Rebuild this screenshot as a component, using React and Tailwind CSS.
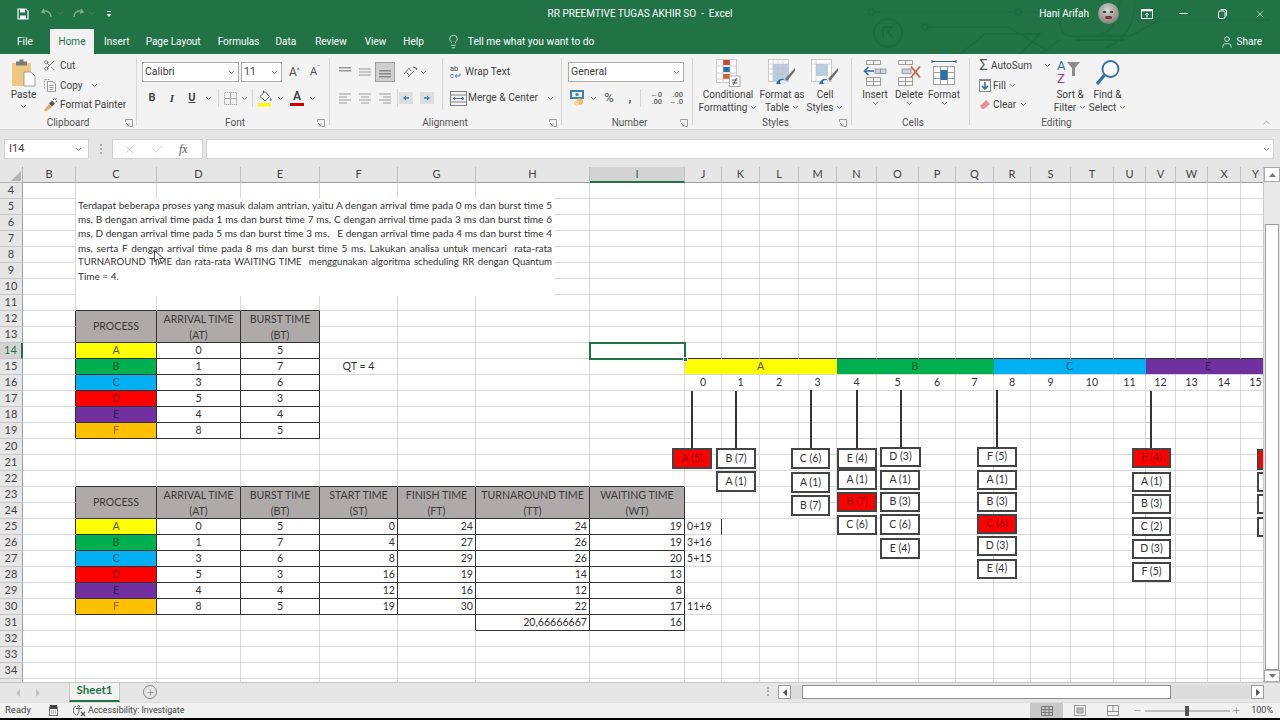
import React from "react";
import { Scissors, Lightbulb, User, X, Check, Minus, Plus, ChevronUp } from "lucide-react";

const COLS = "B C D E F G H I J K L M N O P Q R S T U V W X Y".split(" ");
const ROWS = Array.from({ length: 32 }, (_, i) => i + 4);
const cIdx = (c) => COLS.indexOf(c);

const Y = "bg-[#ffff00] text-[#555]";
const G = "bg-[#00b050] text-[#0d5a2f]";
const L = "bg-[#00b0f0] text-[#1a5f88]";
const R = "bg-[#ff0000] text-[#a00000]";
const P = "bg-[#7030a0] text-[#38195a]";
const O = "bg-[#ffc000] text-[#8a6500]";
const HD = "bg-[#aeaaaa] text-[#3a3a3a]";

const CELLS = {};
const put = (k, t, o = {}) => (CELLS[k] = { t, ...o });
[["C", "PROCESS"], ["D", "ARRIVAL TIME", "(AT)"], ["E", "BURST TIME", "(BT)"]].forEach(([c, a, b]) =>
  put(c + 12, a, { t2: b, rs: 2, bg: HD, al: "c" })
);
[["C", "PROCESS"], ["D", "ARRIVAL TIME", "(AT)"], ["E", "BURST TIME", "(BT)"], ["F", "START TIME", "(ST)"], ["G", "FINISH TIME", "(FT)"], ["H", "TURNAROUND TIME", "(TT)"], ["I", "WAITING TIME", "(WT)"]].forEach(([c, a, b]) =>
  put(c + 23, a, { t2: b, rs: 2, bg: HD, al: "c" })
);
const PROCS = [["A", Y, 0, 5], ["B", G, 1, 7], ["C", L, 3, 6], ["D", R, 5, 3], ["E", P, 4, 4], ["F", O, 8, 5]];
PROCS.forEach(([n, bg, at, bt], i) => {
  put("C" + (14 + i), n, { bg, al: "c" });
  put("D" + (14 + i), at, { al: "c" });
  put("E" + (14 + i), bt, { al: "c" });
  put("C" + (25 + i), n, { bg, al: "c" });
  put("D" + (25 + i), at, { al: "c" });
  put("E" + (25 + i), bt, { al: "c" });
});
const T2 = [[0, 24, 24, 19], [4, 27, 26, 19], [8, 29, 26, 20], [16, 19, 14, 13], [12, 16, 12, 8], [19, 30, 22, 17]];
T2.forEach((r, i) => ["F", "G", "H", "I"].forEach((c, j) => put(c + (25 + i), r[j], { al: "r" })));
put("H31", "20,66666667", { al: "r" });
put("I31", "16", { al: "r" });
put("J25", "0+19", { al: "l", rd: true });
put("J26", "3+16", { al: "l" });
put("J27", "5+15", { al: "l" });
put("J30", "11+6", { al: "l" });
put("F15", "QT = 4", { al: "c" });
put("J15", "A", { cs: 4, bg: Y, al: "c" });
put("N15", "B", { cs: 4, bg: G, al: "c" });
put("R15", "C", { cs: 4, bg: L, al: "c" });
put("V15", "E", { cs: 4, bg: P, al: "c" });
"J K L M N O P Q R S T U V W X Y".split(" ").forEach((c, i) => put(c + 16, i, { al: "c" }));

const covered = new Set();
Object.entries(CELLS).forEach(([k, v]) => {
  const c = k[0];
  const r = +k.slice(1);
  for (let i = 0; i < (v.cs || 1); i++)
    for (let j = 0; j < (v.rs || 1); j++) if (i || j) covered.add(COLS[cIdx(c) + i] + (r + j));
});
const inT = (i, r) => {
  const c = COLS[i];
  if (!c) return false;
  if (i >= 1 && i <= 3 && r >= 12 && r <= 19) return true;
  if (i >= 1 && i <= 7 && r >= 23 && r <= 30) return true;
  if (i >= 6 && i <= 7 && r === 31) return true;
  return false;
};

function Cell({ c, r }) {
  const key = c + r;
  if (covered.has(key)) return null;
  const v = CELLS[key] || {};
  const i = cIdx(c);
  const ci = i + (v.cs || 1) - 1;
  const ri = r + (v.rs || 1) - 1;
  const dr = inT(ci, r) || inT(ci + 1, r) || v.rd;
  const db = inT(i, ri) || inT(i, ri + 1);
  const gantTop = r === 14 && i >= 8;
  const filled = v.bg && v.cs;
  return (
    <div
      className={[
        "border-r border-b min-w-0 flex overflow-visible whitespace-nowrap text-[10.6px] leading-[15px]",
        dr ? "border-r-[#333]" : filled ? "border-r-transparent" : "border-r-[#d9d9d9]",
        db || gantTop ? "border-b-[#333]" : "border-b-[#d9d9d9]",
        v.cs === 4 ? "col-span-4" : "",
        v.rs === 2 ? "row-span-2" : "",
        v.bg || "text-[#333]",
        v.al === "c" ? "justify-center text-center" : v.al === "r" ? "justify-end text-right pr-[2px]" : "justify-start pl-[2px]",
        "items-center",
      ].join(" ")}
    >
      {v.t2 ? (
        <div className="leading-[16px]">
          <div>{v.t}</div>
          <div>{v.t2}</div>
        </div>
      ) : (
        v.t
      )}
    </div>
  );
}

const BOXES = [
  ["A (5)", "left-[672px] top-[448px] w-[40px] h-[21px]", 1],
  ["B (7)", "left-[716px] top-[448px] w-[40px] h-[21px]"],
  ["A (1)", "left-[716px] top-[471px] w-[40px] h-[21px]"],
  ["C (6)", "left-[791px] top-[448px] w-[39px] h-[21px]"],
  ["A (1)", "left-[791px] top-[472px] w-[39px] h-[21px]"],
  ["B (7)", "left-[791px] top-[495px] w-[39px] h-[21px]"],
  ["E (4)", "left-[837px] top-[448px] w-[40px] h-[21px]"],
  ["A (1)", "left-[837px] top-[469px] w-[40px] h-[21px]"],
  ["B (7)", "left-[837px] top-[492px] w-[40px] h-[20px]", 1],
  ["C (6)", "left-[837px] top-[515px] w-[40px] h-[20px]"],
  ["D (3)", "left-[880px] top-[447px] w-[41px] h-[20px]"],
  ["A (1)", "left-[880px] top-[470px] w-[40px] h-[20px]"],
  ["B (3)", "left-[880px] top-[492px] w-[40px] h-[20px]"],
  ["C (6)", "left-[880px] top-[514px] w-[40px] h-[21px]"],
  ["E (4)", "left-[880px] top-[538px] w-[40px] h-[21px]"],
  ["F (5)", "left-[977px] top-[447px] w-[40px] h-[20px]"],
  ["A (1)", "left-[977px] top-[470px] w-[40px] h-[20px]"],
  ["B (3)", "left-[977px] top-[492px] w-[40px] h-[20px]"],
  ["C (6)", "left-[977px] top-[514px] w-[40px] h-[20px]", 1],
  ["D (3)", "left-[977px] top-[536px] w-[40px] h-[20px]"],
  ["E (4)", "left-[977px] top-[559px] w-[40px] h-[20px]"],
  ["E (4)", "left-[1132px] top-[448px] w-[39px] h-[20px]", 1],
  ["A (1)", "left-[1132px] top-[472px] w-[39px] h-[20px]"],
  ["B (3)", "left-[1132px] top-[494px] w-[39px] h-[20px]"],
  ["C (2)", "left-[1132px] top-[517px] w-[39px] h-[19px]"],
  ["D (3)", "left-[1132px] top-[539px] w-[39px] h-[20px]"],
  ["F (5)", "left-[1132px] top-[562px] w-[39px] h-[20px]"],
  ["", "left-[1257px] top-[449px] w-[40px] h-[21px]", 1],
  ["", "left-[1257px] top-[472px] w-[40px] h-[20px]"],
  ["", "left-[1257px] top-[494px] w-[40px] h-[20px]"],
  ["", "left-[1257px] top-[517px] w-[40px] h-[20px]"],
];
const LINES = [
  "left-[691px] h-[57px] top-[391px]",
  "left-[735px] h-[57px] top-[391px]",
  "left-[810px] h-[58px] top-[390px]",
  "left-[856px] h-[58px] top-[390px]",
  "left-[900px] h-[57px] top-[390px]",
  "left-[996px] h-[57px] top-[390px]",
  "left-[1150px] h-[57px] top-[391px]",
];

const TEXT = [
  "Terdapat beberapa proses yang masuk dalam antrian, yaitu A dengan arrival time pada 0 ms dan burst time 5",
  "ms, B dengan arrival time pada 1 ms dan burst time 7 ms, C dengan arrival time pada 3 ms dan burst time 6",
  "ms, D dengan arrival time pada 5 ms dan burst time 3 ms,   E dengan arrival time pada 4 ms dan burst time 4",
  "ms, serta F dengan arrival time pada 8 ms dan burst time 5 ms. Lakukan analisa untuk mencari  rata-rata",
];

const Chev = ({ className = "" }) => (
  <svg width="7" height="5" viewBox="0 0 7 5" className={`shrink-0 ${className}`}>
    <path d="M1 1l2.5 2.5L6 1" fill="none" stroke="#777" strokeWidth="1" />
  </svg>
);
const Launcher = () => (
  <svg width="8" height="8" viewBox="0 0 8 8">
    <path d="M.5 3V.5H7.5V7.5H4.5M1 4l3 3M4 4.5V7H1.5" fill="none" stroke="#888" strokeWidth="0.8" />
  </svg>
);
const VSep = ({ className = "" }) => <div className={`w-px bg-[#d6d6d6] shrink-0 ${className}`} />;
const Box20 = ({ children, className = "" }) => (
  <div className={`w-[20px] h-[20px] flex items-center justify-center shrink-0 ${className}`}>{children}</div>
);

function Group({ className = "", label, launcher, children }) {
  return (
    <div className={`flex flex-col shrink-0 ${className}`}>
      <div className="h-[62px] flex min-h-0">{children}</div>
      <div className="relative h-[13px] leading-[14px] text-center text-[10px] text-[#555]">
        {label}
        {launcher && (
          <div className="absolute right-[3px] top-[3px] flex">
            <Launcher />
          </div>
        )}
      </div>
    </div>
  );
}

function BigBtn({ className = "", icon, l1, l2, chev2 = true }) {
  return (
    <div className={`flex flex-col items-center pt-[4px] whitespace-nowrap shrink-0 ${className}`}>
      <div className="h-[30px] flex items-center justify-center">{icon}</div>
      <div className="leading-[13px]">{l1}</div>
      <div className="leading-[13px] flex items-center justify-center gap-[3px]">
        {l2}
        {chev2 && <Chev />}
      </div>
    </div>
  );
}

const AlignI = ({ ys, xs, gray = "#9a9a9a", h = 1.5 }) => (
  <svg width="14" height="14" viewBox="0 0 14 14">
    {ys.map((y, i) => (
      <rect key={i} x={xs ? xs[i][0] : 1} y={y} width={xs ? xs[i][1] : 12} height={h} fill={gray} />
    ))}
  </svg>
);

const IconPaste = () => (
  <svg width="26" height="28" viewBox="0 0 26 28">
    <rect x="1" y="4" width="19" height="23" fill="#eec883" />
    <rect x="5" y="2.5" width="11" height="4" fill="#7a7a7a" />
    <rect x="8.5" y="0.5" width="4" height="3" fill="#7a7a7a" />
    <path d="M13 13h7l4 4v10H13z" fill="#fff" stroke="#8a8a8a" strokeWidth="0.8" />
  </svg>
);
const IconCopy = () => (
  <svg width="14" height="14" viewBox="0 0 14 14" fill="none" stroke="#8d8d8d" strokeWidth="0.9">
    <path d="M1.5 10.5V1.5H7" strokeDasharray="2 1" />
    <path d="M4.5 3.5h5.5l2.5 2.5v7.5h-8z" fill="#fff" />
    <path d="M6.5 7.5h4M6.5 9.5h4M6.5 11.5h4" />
  </svg>
);
const IconBrush = () => (
  <svg width="15" height="14" viewBox="0 0 15 14">
    <path d="M1 12l5-6 3 3-6 4.5z" fill="#d7ae62" />
    <path d="M6 5.5l3-3 3 3-3 3z" fill="#555" />
    <path d="M10 2l1.5-1.5M12.5 4l1.5-1M12 1.5l1.5-1" stroke="#555" strokeWidth="1" />
  </svg>
);
const IconBorder = () => (
  <svg width="15" height="15" viewBox="0 0 15 15" fill="none" stroke="#a8a8a8" strokeWidth="1">
    <rect x="1.5" y="1.5" width="12" height="12" strokeDasharray="1.5 0.6" />
    <path d="M7.5 1.5v12M1.5 7.5h12" />
  </svg>
);
const IconFill = () => (
  <svg width="16" height="18" viewBox="0 0 16 18">
    <path d="M3 7.5L8 2.5l4.5 5L8 12z" fill="#fff" stroke="#666" strokeWidth="1" />
    <path d="M6.5 4V1.5" stroke="#666" strokeWidth="1" />
    <path d="M13.5 8.5c1 1.5 1.3 2.2 1 3-.4.8-1.8.6-1.8-.3 0-.6.4-1.6.8-2.7z" fill="#4a7fb5" />
    <rect x="1" y="14" width="13" height="3.5" fill="#ffff00" />
  </svg>
);
const IconOrient = () => (
  <svg width="16" height="14" viewBox="0 0 16 14" fill="none" stroke="#777" strokeWidth="1">
    <path d="M2 9l5-6 2 3M4 7.5l3 2M6 12l6-6" />
    <path d="M11 2l4 1.5-1 1.5" strokeWidth="1" stroke="#555" />
  </svg>
);
const IconWrap = () => (
  <span className="flex flex-col text-[7.5px] leading-[7px] text-[#444] w-[12px]">
    <span>ab</span>
    <span className="flex items-center">
      c<svg width="7" height="6" viewBox="0 0 7 6"><path d="M6 .5V3H1.5M3 1.5L1 3l2 1.5" fill="none" stroke="#3a78b5" strokeWidth="0.9" /></svg>
    </span>
  </span>
);
const IconMerge = () => (
  <svg width="17" height="15" viewBox="0 0 17 15" fill="none" stroke="#777" strokeWidth="0.9">
    <rect x="0.5" y="0.5" width="16" height="14" />
    <path d="M.5 4h16M.5 11h16" />
    <path d="M3 7.5h11M3 7.5l2-1.5M3 7.5l2 1.5M14 7.5l-2-1.5M14 7.5l-2 1.5" stroke="#2f6fa8" />
  </svg>
);
const IconIndent = ({ flip }) => (
  <svg width="14" height="14" viewBox="0 0 14 14" className={flip ? "-scale-x-100" : ""}>
    <rect x="0" y="1" width="14" height="12" fill="#dedede" />
    <path d="M7 4.5L4 7l3 2.5z" fill="#3f7fb3" />
    <rect x="6.5" y="6.2" width="3.5" height="1.6" fill="#3f7fb3" />
  </svg>
);
const IconAcct = () => (
  <svg width="18" height="18" viewBox="0 0 18 18">
    <rect x="1" y="1" width="14" height="9" fill="#3f7fb3" />
    <rect x="3" y="3" width="10" height="5" fill="#e6f0f7" />
    <circle cx="8" cy="5.5" r="1.6" fill="#3f7fb3" />
    <circle cx="11" cy="12.5" r="3.2" fill="#edbb6d" />
    <circle cx="7.5" cy="14" r="2.6" fill="#f3d7a6" />
  </svg>
);
const IconDecUp = ({ up }) => (
  <span className="relative w-[16px] h-[14px] text-[7.5px] leading-[7px] font-semibold text-[#666] text-right flex flex-col">
    <span>{up ? "←0" : ".00"}</span>
    <span>{up ? ".00" : "→.0"}</span>
  </span>
);
const IconCond = () => (
  <svg width="25" height="28" viewBox="0 0 25 28">
    <g stroke="#bdbdbd" strokeWidth="0.8" fill="#fff">
      <rect x="0.5" y="0.5" width="20" height="23" />
    </g>
    <rect x="7" y="1" width="7" height="5" fill="#c7472f" />
    <rect x="7" y="8" width="7" height="5" fill="#2f6fa8" />
    <rect x="7" y="15" width="7" height="5" fill="#d0662c" />
    <path d="M7 1v22M14 1v22M1 7h20M1 14h20M1 20h20" stroke="#bdbdbd" strokeWidth="0.7" />
    <rect x="13.5" y="17" width="10.5" height="10.5" fill="#fff" stroke="#999" strokeWidth="0.8" />
    <path d="M16 21h5.5M16 24h5.5M20.5 19l-3 7" stroke="#444" strokeWidth="0.9" />
  </svg>
);
const IconTbl = ({ kind }) => (
  <svg width="28" height="28" viewBox="0 0 28 28">
    <rect x="0.5" y="0.5" width="20" height="22" fill="#fff" stroke="#bdbdbd" strokeWidth="0.8" />
    {kind === "table" ? (
      <>
        <rect x="5" y="5" width="15" height="17" fill="#b9cde3" />
        <path d="M5 1v21M10 1v21M15 1v21M1 5h19M1 10h19M1 15h19" stroke="#c2c2c2" strokeWidth="0.7" />
      </>
    ) : (
      <>
        <rect x="5" y="5" width="12" height="12" fill="#b9cde3" />
        <path d="M1 5h19M5 1v21" stroke="#c2c2c2" strokeWidth="0.7" />
      </>
    )}
    <path d="M27 9L17 20l2 2L27 12z" fill="#6f6f6f" />
    <path d="M8 27c0-5 4-8 7-7 2 .7 3 3 2 5H8z" fill="#2f6fa8" />
    <ellipse cx="15" cy="23" rx="3" ry="2" fill="#e8eef5" />
  </svg>
);
const IconInsert = () => (
  <svg width="24" height="28" viewBox="0 0 24 28" fill="none" stroke="#8c8c8c" strokeWidth="0.8">
    <path d="M3.5 1.5h14v4h-14zM10.5 1.5v4M3.5 18.5h14v8h-14zM10.5 18.5v8M3.5 22.5h14" />
    <rect x="12" y="10" width="5.5" height="4.5" fill="#c9d3dd" />
    <rect x="17.5" y="10" width="5.5" height="4.5" fill="#c9d3dd" />
    <path d="M11 12H1.5M5.5 8l-4 4 4 4" stroke="#2f6fa8" strokeWidth="1.7" />
  </svg>
);
const IconDelete = () => (
  <svg width="26" height="28" viewBox="0 0 26 28" fill="none" stroke="#8c8c8c" strokeWidth="0.8">
    <path d="M2.5 1.5h14v4h-14zM9.5 1.5v4M2.5 18.5h14v8h-14zM9.5 18.5v8M2.5 22.5h14" />
    <rect x="6" y="10" width="9" height="4.5" fill="#c9d3dd" />
    <path d="M15 7.5l9 11M24 7.5l-9 11" stroke="#d9614a" strokeWidth="1.8" />
  </svg>
);
const IconFormat = () => (
  <svg width="26" height="28" viewBox="0 0 26 28" fill="none" stroke="#8c8c8c" strokeWidth="0.8">
    <path d="M1 2.5h24M1 1v3M25 1v3" stroke="#2f6fa8" strokeWidth="1" />
    <rect x="2.5" y="7.5" width="21" height="18" fill="#fff" />
    <path d="M9.5 7.5v18M16.5 7.5v18M2.5 13.5h21M2.5 19.5h21" />
    <rect x="9.5" y="11" width="7" height="10" fill="#2f6fa8" stroke="none" />
  </svg>
);
const IconSort = () => (
  <span className="w-[26px] h-[28px] flex items-start">
    <span className="flex flex-col text-[13px] leading-[13px]">
      <span className="text-[#2f6fa8]">A</span>
      <span className="text-[#a23f96]">Z</span>
    </span>
    <svg width="13" height="14" viewBox="0 0 13 14" className="mt-[3px] ml-[2px]">
      <path d="M0 0h13L8 6v8H5V6z" fill="#8b8b8b" />
    </svg>
  </span>
);
const IconFind = () => (
  <svg width="26" height="28" viewBox="0 0 26 28" fill="none">
    <circle cx="15.5" cy="10" r="8" stroke="#2f6fa8" strokeWidth="1.8" fill="#fff" />
    <path d="M9.5 16L2 25" stroke="#2f6fa8" strokeWidth="3.2" />
  </svg>
);

function TitleBar() {
  return (
    <div className="relative h-[27px] flex items-center text-white text-[10px]">
      <svg width="12" height="12" viewBox="0 0 12 12" className="ml-[17px]">
        <path d="M1 1h8l2 2v8H1z" fill="none" stroke="#fff" strokeWidth="1.2" />
        <rect x="3" y="1" width="5" height="3.5" fill="#fff" />
        <rect x="3" y="7.5" width="6" height="3.5" fill="#fff" />
      </svg>
      <svg width="12" height="11" viewBox="0 0 12 11" className="ml-[12px] opacity-40">
        <path d="M3 1L1 4l3 1M1.5 4c3-2 8-1 8.5 5" fill="none" stroke="#fff" strokeWidth="1.4" />
      </svg>
      <Chev className="ml-[4px] opacity-40 invert" />
      <svg width="12" height="11" viewBox="0 0 12 11" className="ml-[8px] -scale-x-100 opacity-40">
        <path d="M3 1L1 4l3 1M1.5 4c3-2 8-1 8.5 5" fill="none" stroke="#fff" strokeWidth="1.4" />
      </svg>
      <Chev className="ml-[4px] opacity-40 invert" />
      <svg width="6" height="8" viewBox="0 0 6 8" className="ml-[11px]">
        <path d="M1 1.5h4M1 4l2 2.5L5 4" fill="#fff" stroke="#fff" strokeWidth="0.8" />
      </svg>
      <div className="absolute inset-x-0 top-[6px] text-center leading-[15px] whitespace-pre">RR PREEMTIVE TUGAS AKHIR SO  -  Excel</div>
      <div className="ml-auto flex items-center relative">
        <span className="leading-[15px]">Hani Arifah</span>
        <div className="relative ml-[9px] w-[21px] h-[21px] rounded-full bg-[radial-gradient(circle_at_45%_35%,#cfd8cd_0%,#a9a09c_45%,#5f6a66_100%)] overflow-hidden flex items-center justify-center">
          <div className="absolute left-[5px] top-[8px] w-[3px] h-[2px] bg-[#444]" />
          <div className="absolute left-[12px] top-[8px] w-[3px] h-[2px] bg-[#444]" />
          <div className="w-[7px] h-[3px] mt-[7px] rounded-full bg-[#7a3a3a]" />
        </div>
        <svg width="12" height="10" viewBox="0 0 12 10" className="ml-[22px]">
          <rect x="0.5" y="0.5" width="11" height="9" fill="none" stroke="#fff" />
          <path d="M1 1.5h10" stroke="#fff" strokeWidth="1.5" />
          <path d="M6 8.5V4M4 6l2-2 2 2" stroke="#fff" fill="none" />
        </svg>
        <div className="ml-[26px] w-[9px] h-px bg-white" />
        <svg width="9" height="10" viewBox="0 0 9 10" fill="none" stroke="#fff" className="ml-[30px]">
          <rect x="0.5" y="2" width="6.5" height="7.5" rx="1.5" />
          <path d="M2.5 .7H7A1.5 1.5 0 0 1 8.5 2.2V7" />
        </svg>
        <X size={12} strokeWidth={1.2} className="ml-[27px] mr-[14px]" />
      </div>
    </div>
  );
}

function TabsRow() {
  const tabs = [
    ["Insert", "ml-[10px]"],
    ["Page Layout", "ml-[16px]"],
    ["Formulas", "ml-[17px]"],
    ["Data", "ml-[16px]"],
    ["Review", "ml-[19px]"],
    ["View", "ml-[18px]"],
    ["Help", "ml-[17px]"],
  ];
  return (
    <div className="h-[27px] flex items-end text-[10px] text-white">
      <div className="h-[25px] leading-[25px] ml-[17px] w-[33px]">File</div>
      <div className="h-[25px] w-[44px] bg-[#f3f3f3] text-[#217346] text-center leading-[25px]">Home</div>
      {tabs.map(([t, m]) => (
        <div key={t} className={`h-[25px] leading-[25px] ${m}`}>
          {t}
        </div>
      ))}
      <Lightbulb size={15} strokeWidth={1.1} className="ml-[22px] mb-[5px]" />
      <div className="h-[25px] leading-[25px] ml-[7px] text-[10.2px]">Tell me what you want to do</div>
      <div className="ml-auto mr-[18px] h-[25px] flex items-center gap-[3px]">
        <User size={14} strokeWidth={1.2} />
        Share
      </div>
    </div>
  );
}

function Ribbon() {
  const input = "h-[20px] bg-white border border-[#ababab] flex items-center px-[2px] text-[10.5px]";
  return (
    <div className="h-[76px] bg-[#f3f3f3] border-b border-[#d2d2d2] flex text-[10px] text-[#444]">
      <Group className="w-[136px]" label="Clipboard" launcher>
        <div className="w-[47px] flex flex-col items-center pt-[5px] shrink-0">
          <IconPaste />
          <div className="leading-[13px] mt-[1px]">Paste</div>
          <Chev className="mt-[3px]" />
        </div>
        <div className="flex flex-col -ml-[4px] pt-px">
          <div className="h-[20px] flex items-center gap-[3px]">
            <Scissors size={13} strokeWidth={1.2} className="text-[#555]" />
            <span className="ml-[1px]">Cut</span>
          </div>
          <div className="h-[20px] flex items-center gap-[3px]">
            <IconCopy />
            Copy
            <Chev className="ml-[5px]" />
          </div>
          <div className="h-[19px] flex items-center gap-[2px] whitespace-nowrap">
            <IconBrush />
            Format Painter
          </div>
        </div>
      </Group>
      <VSep className="mt-[4px] mb-[4px]" />
      <Group className="w-[191px] pl-[5px]" label="Font" launcher>
        <div className="flex flex-col flex-1">
          <div className="flex items-center mt-[8px]">
            <div className={`${input} w-[97px] justify-between`}>
              <span>Calibri</span>
              <Chev className="mr-[1px]" />
            </div>
            <div className={`${input} w-[41px] ml-[2px] justify-between`}>
              <span>11</span>
              <Chev className="mr-[1px]" />
            </div>
            <span className="ml-[7px] w-[21px] text-[12px] text-[#555]">A<sup className="text-[7px]">^</sup></span>
            <span className="w-[21px] text-[11px] text-[#555]">A<sup className="text-[7px]">ˇ</sup></span>
          </div>
          <div className="flex items-center mt-[6px]">
            <Box20><span className="font-bold text-[11px]">B</span></Box20>
            <Box20><span className="italic font-bold text-[11px] font-['Liberation_Serif']">I</span></Box20>
            <Box20><span className="font-bold underline text-[11px]">U</span></Box20>
            <Chev className="ml-[3px]" />
            <VSep className="h-[18px] ml-[6px]" />
            <Box20 className="ml-[1px]"><IconBorder /></Box20>
            <Chev className="ml-[1px]" />
            <VSep className="h-[18px] ml-[4px]" />
            <Box20 className="ml-[2px]"><IconFill /></Box20>
            <Chev className="ml-[2px]" />
            <div className="ml-[3px] w-[20px] flex flex-col items-center">
              <span className="text-[12px] leading-[12px] font-semibold text-[#444]">A</span>
              <span className="w-[14px] h-[3px] bg-[#d00000] mt-[1px]" />
            </div>
            <Chev className="ml-[2px]" />
          </div>
        </div>
      </Group>
      <VSep className="mt-[4px] mb-[4px] ml-[1px]" />
      <Group className="w-[230px]" label="Alignment" launcher>
        <div className="w-[112px] shrink-0 flex flex-col pl-[5px]">
          <div className="flex items-center mt-[8px]">
            <Box20><AlignI ys={[2, 5]} /></Box20>
            <Box20><AlignI ys={[3, 6, 9]} h={2} gray="#c4c4c4" /></Box20>
            <Box20 className="bg-[#cfcfcf] border border-[#9e9e9e]"><AlignI ys={[5, 8, 11]} gray="#8a8a8a" /></Box20>
            <Box20 className="ml-[5px]"><IconOrient /></Box20>
            <Chev />
          </div>
          <div className="flex items-center mt-[6px]">
            <Box20><AlignI ys={[2, 5, 8, 11]} xs={[[1, 12], [1, 8], [1, 12], [1, 8]]} h={2} gray="#c8c8c8" /></Box20>
            <Box20><AlignI ys={[2, 5, 8, 11]} xs={[[1, 12], [3, 8], [1, 12], [3, 8]]} h={2} gray="#c8c8c8" /></Box20>
            <Box20><AlignI ys={[2, 5, 8, 11]} xs={[[1, 12], [5, 8], [1, 12], [5, 8]]} h={2} gray="#c8c8c8" /></Box20>
            <VSep className="h-[18px] ml-[2px] -mr-[2px]" />
            <Box20><IconIndent /></Box20>
            <Box20 className="ml-[1px]"><IconIndent flip /></Box20>
          </div>
        </div>
        <VSep className="h-[52px] mt-[4px]" />
        <div className="flex flex-col pl-[7px] whitespace-nowrap">
          <div className="flex items-center mt-[8px] h-[20px] gap-[3px] text-[10.2px]">
            <IconWrap />
            <span>Wrap Text</span>
          </div>
          <div className="flex items-center mt-[6px] h-[20px] text-[10.2px]">
            <IconMerge />
            <span className="ml-[1px]">Merge &amp; Center</span>
            <Chev className="ml-[9px]" />
          </div>
        </div>
      </Group>
      <VSep className="mt-[4px] mb-[4px] ml-[1px]" />
      <Group className="w-[129px] pl-[6px]" label="Number" launcher>
        <div className="flex flex-col flex-1">
          <div className={`${input} w-[116px] mt-[8px] justify-between`}>
            <span>General</span>
            <Chev className="mr-[1px]" />
          </div>
          <div className="flex items-center mt-[6px] h-[20px]">
            <Box20><IconAcct /></Box20>
            <Chev className="ml-[2px]" />
            <span className="ml-[2px] w-[20px] text-center text-[13px] text-[#555]">%</span>
            <span className="ml-[1px] w-[20px] text-center font-bold text-[12px] text-[#555]">,</span>
            <VSep className="h-[18px]" />
            <span className="ml-[5px]"><IconDecUp up /></span>
            <span className="ml-[5px]"><IconDecUp /></span>
          </div>
        </div>
      </Group>
      <VSep className="mt-[4px] mb-[4px] ml-[1px]" />
      <Group className="w-[157px] pl-[8px]" label="Styles" launcher>
        <BigBtn className="w-[54px]" icon={<IconCond />} l1="Conditional" l2="Formatting" />
        <BigBtn className="w-[54px]" icon={<IconTbl kind="table" />} l1="Format as" l2="Table" />
        <BigBtn className="w-[32px]" icon={<IconTbl kind="cell" />} l1="Cell" l2="Styles" />
      </Group>
      <VSep className="mt-[4px] mb-[4px] ml-[1px]" />
      <Group className="w-[116px] pl-[6px]" label="Cells">
        <BigBtn className="w-[34px]" icon={<IconInsert />} l1="Insert" l2="" />
        <BigBtn className="w-[34px]" icon={<IconDelete />} l1="Delete" l2="" />
        <BigBtn className="w-[36px]" icon={<IconFormat />} l1="Format" l2="" />
      </Group>
      <VSep className="mt-[4px] mb-[4px] ml-[1px]" />
      <Group className="w-[164px] pl-[9px]" label="Editing">
        <div className="w-[72px] flex flex-col pt-px shrink-0">
          <div className="h-[20px] flex items-center gap-[3px]">
            <span className="w-[11px] text-[15px] leading-[15px] text-[#555] text-center">Σ</span>
            AutoSum
            <Chev className="ml-[9px]" />
          </div>
          <div className="h-[20px] flex items-center gap-[2px]">
            <svg width="12" height="13" viewBox="0 0 12 13">
              <rect x="0.5" y="0.5" width="11" height="12" fill="#fff" stroke="#8a8a8a" />
              <rect x="0.5" y="0.5" width="11" height="1.5" fill="#8a8a8a" />
              <path d="M6 3v7M3 7l3 3 3-3" fill="none" stroke="#2f6fa8" strokeWidth="1.6" />
            </svg>
            Fill
            <Chev className="ml-[1px]" />
          </div>
          <div className="h-[19px] flex items-center gap-[2px]">
            <svg width="12" height="11" viewBox="0 0 12 11">
              <path d="M1 7L7 1l4 4-6 5H3z" fill="#ec8f9c" />
            </svg>
            Clear
            <Chev className="ml-[2px]" />
          </div>
        </div>
        <BigBtn className="w-[38px]" icon={<IconSort />} l1="Sort &" l2="Filter" />
        <BigBtn className="w-[37px]" icon={<IconFind />} l1="Find &" l2="Select" />
      </Group>
      <div className="flex-1 flex items-end justify-end pb-[1px] pr-[8px]">
        <ChevronUp size={11} strokeWidth={1.2} className="text-[#666]" />
      </div>
    </div>
  );
}

function FormulaBar() {
  return (
    <div className="h-[37px] bg-[#e6e6e6] flex items-start pt-[9px] text-[#444]">
      <div className="ml-[4px] w-[85px] h-[20px] bg-white border border-[#d2d2d2] flex items-center justify-between px-[4px] text-[11px]">
        <span>I14</span>
        <Chev className="mr-[2px]" />
      </div>
      <div className="ml-[11px] w-[2px] h-[10px] mt-[5px] border-l-2 border-dotted border-[#aaa]" />
      <div className="ml-[10px] w-[91px] h-[20px] bg-white border border-[#d2d2d2] flex items-center gap-[15px] pl-[10px] text-[#b5b5b5]">
        <X size={13} strokeWidth={1.2} />
        <Check size={13} strokeWidth={1.2} />
        <span className="italic text-[#555] text-[12px] font-['Liberation_Serif']">fx</span>
      </div>
      <div className="ml-[3px] w-[1068px] h-[20px] bg-white border border-[#d2d2d2] flex items-center justify-end pr-[2px]">
        <Chev className="mr-[1px]" />
      </div>
    </div>
  );
}

function Sheet() {
  return (
    <div className="h-[515px] flex bg-[#e6e6e6] overflow-hidden">
      <div className="relative w-[1263px] h-full overflow-hidden bg-white shrink-0 font-['Lato',sans-serif]">
        <div className="grid grid-cols-[23px_53px_81px_84px_79px_78px_78px_114px_95px_37px_38px_39px_38px_40px_42px_37px_38px_37px_40px_43px_32px_30px_32px_33px_30px] grid-rows-[16px] auto-rows-[16px] w-[1271px]">
          <div className="bg-[#e6e6e6] border-b border-r border-[#b5b5b5] flex items-end justify-end">
            <svg width="10" height="10" viewBox="0 0 10 10" className="mr-px mb-px">
              <path d="M10 0v10H0z" fill="#b4b4b4" />
            </svg>
          </div>
          {COLS.map((c) => (
            <div
              key={c}
              className={`border-r border-[#c0c0c0] flex items-center justify-center text-[11px] ${c === "I" ? "bg-[#d3d3d3] text-[#217346] border-b-2 border-b-[#217346]" : "bg-[#e6e6e6] text-[#444] border-b border-b-[#9f9f9f]"}`}
            >
              {c}
            </div>
          ))}
          {ROWS.map((r) => (
            <React.Fragment key={r}>
              <div
                className={`border-b border-[#c6c6c6] flex items-center justify-center text-[11px] ${r === 14 ? "bg-[#d3d3d3] text-[#217346] border-r-2 border-r-[#217346]" : "bg-[#e6e6e6] text-[#444] border-r border-r-[#9f9f9f]"}`}
              >
                {r === 35 ? "" : r}
              </div>
              {COLS.map((c) => (
                <Cell key={c} c={c} r={r} />
              ))}
            </React.Fragment>
          ))}
        </div>
        <div className="absolute left-0 top-[-167px]">
          <div className="absolute left-[76px] top-[198px] w-[479px] h-[98px] bg-white pl-[2px] pr-[3px] text-[10px] leading-[14.2px] text-[#333]">
            {TEXT.map((t) => (
              <div key={t} className="whitespace-pre-wrap text-justify [text-align-last:justify]">
                {t}
              </div>
            ))}
            <div className="whitespace-pre-wrap text-justify [text-align-last:justify] text-[9.6px]">
              TURNAROUND TIME dan rata-rata WAITING TIME  menggunakan algoritma scheduling RR dengan Quantum
            </div>
            <div>Time = 4.</div>
          </div>
          <svg width="11" height="15" viewBox="0 0 11 15" className="absolute left-[154px] top-[250px]">
            <path d="M.5.5v11l3-2.5 2 4.5 2-1-2-4h4z" fill="#fff" stroke="#222" strokeWidth="0.8" />
          </svg>
          {LINES.map((l) => (
            <div key={l} className={`absolute w-[2px] bg-[#333] ${l}`} />
          ))}
          {BOXES.map(([t, pos, red]) => (
            <div
              key={pos}
              className={`absolute border-2 border-[#444] flex items-center justify-center text-[10.5px] whitespace-nowrap ${pos} ${red ? "bg-[#ff0000] text-[#8a0a0a]" : "bg-white text-[#333]"}`}
            >
              {t}
            </div>
          ))}
          <div className="absolute left-[589px] top-[342px] w-[97px] h-[18px] border-2 border-[#217346]" />
          <div className="absolute left-[683px] top-[357px] w-[5px] h-[5px] bg-[#217346] border border-white" />
        </div>
      </div>
      <div className="flex-1 flex flex-col items-stretch bg-[#e9e9e9] border-l border-[#c8c8c8]">
        <div className="h-[15px] flex items-center justify-center bg-white border border-[#ababab]">
          <svg width="7" height="4" viewBox="0 0 7 4"><path d="M0 4l3.5-4L7 4z" fill="#777" /></svg>
        </div>
        <div className="h-[42px]" />
        <div className="flex-1 bg-white border border-[#9a9a9a] mx-[1px]" />
        <div className="h-[12px] flex items-center justify-center bg-white border border-[#ababab]">
          <svg width="7" height="4" viewBox="0 0 7 4"><path d="M0 0l3.5 4L7 0z" fill="#777" /></svg>
        </div>
      </div>
    </div>
  );
}

function SheetTabs() {
  return (
    <div className="h-[20px] bg-[#e6e6e6] flex items-start border-t border-[#c6c6c6] text-[#777]">
      <svg width="24" height="8" viewBox="0 0 24 8" className="ml-[16px] mt-[6px] opacity-50">
        <path d="M4 0L0 4l4 4zM20 0l4 4-4 4z" fill="#999" />
      </svg>
      <div className="ml-[29px] w-[51px] h-[19px] bg-[#f3f3f3] border-b-2 border-b-[#217346] border-x border-x-[#c6c6c6] text-center text-[11.5px] leading-[13px] font-bold text-[#217346] font-['Lato',sans-serif]">
        Sheet1
      </div>
      <div className="ml-[23px] mt-[2px] w-[14px] h-[14px] rounded-full border border-[#888] flex items-center justify-center">
        <Plus size={9} strokeWidth={1.4} className="text-[#666]" />
      </div>
      <div className="ml-[610px] mt-[4px] w-[2px] h-[9px] border-l-2 border-dotted border-[#aaa]" />
      <div className="ml-[9px] mt-[2px] w-[13px] h-[14px] bg-white border border-[#9c9c9c] flex items-center justify-center">
        <svg width="4" height="7" viewBox="0 0 4 7"><path d="M4 0L0 3.5 4 7z" fill="#555" /></svg>
      </div>
      <div className="mt-[2px] w-[460px] h-[14px] bg-[#dcdcdc] flex">
        <div className="ml-[11px] w-[369px] h-full bg-white border border-[#8f8f8f]" />
      </div>
      <div className="mt-[2px] w-[13px] h-[14px] bg-white border border-[#9c9c9c] flex items-center justify-center">
        <svg width="4" height="7" viewBox="0 0 4 7"><path d="M0 0l4 3.5L0 7z" fill="#555" /></svg>
      </div>
    </div>
  );
}

function StatusBar() {
  return (
    <div className="h-[16px] bg-[#f1f1f1] flex items-center text-[9.5px] text-[#444] border-t border-[#dcdcdc]">
      <span className="ml-[5px]">Ready</span>
      <svg width="9" height="11" viewBox="0 0 9 11" className="ml-[18px]">
        <rect x="0.5" y="2" width="8" height="8.5" fill="#fff" stroke="#777" />
        <rect x="1" y="0" width="7" height="4" fill="#444" />
        <path d="M2 6h1M4 6h1M6 6h1M2 8h1M4 8h1M6 8h1" stroke="#666" />
      </svg>
      <svg width="13" height="13" viewBox="0 0 13 13" fill="none" stroke="#555" strokeWidth="0.9" className="ml-[15px]">
        <path d="M3 2a5 5 0 0 0 0 9M5.5 1.5a1 1 0 1 0 .1 0M3 4.5h6M6 4.5v3M6 7.5l-2 4" />
        <path d="M8 8l4 4M12 8l-4 4" strokeWidth="1.2" />
      </svg>
      <span className="ml-[2px] text-[8.8px]">Accessibility: Investigate</span>
      <div className="ml-auto w-[33px] h-full bg-[#c7c7c7] flex items-center justify-center">
        <svg width="12" height="10" viewBox="0 0 12 10" fill="none" stroke="#666" strokeWidth="0.8">
          <path d="M.5.5h11v9H.5zM4 .5v9M8 .5v9M.5 3.5h11M.5 6.5h11" />
        </svg>
      </div>
      <svg width="12" height="11" viewBox="0 0 12 11" fill="none" stroke="#888" strokeWidth="0.8" className="ml-[11px]">
        <rect x="0.5" y="0.5" width="11" height="10" />
        <rect x="3" y="3" width="6" height="5" fill="#bbb" />
      </svg>
      <svg width="12" height="11" viewBox="0 0 12 11" fill="none" stroke="#777" strokeWidth="0.8" className="ml-[21px]">
        <path d="M.5.5h11v10H.5zM.5 6.5h11M6 .5v6" />
      </svg>
      <Minus size={9} strokeWidth={1.3} className="ml-[14px] text-[#555]" />
      <div className="ml-[3px] w-[85px] h-[2px] bg-[#bdbdbd] relative">
        <div className="absolute left-[40px] top-[-4px] w-[4px] h-[10px] bg-[#555]" />
      </div>
      <Plus size={9} strokeWidth={1.3} className="ml-[2px] text-[#555]" />
      <span className="ml-[10px] mr-[7px] text-[9px]">100%</span>
    </div>
  );
}

const Circuit = () => (
  <svg width="480" height="54" viewBox="800 0 480 54" fill="none" stroke="#1d6a40" strokeWidth="1.4" className="absolute right-0 top-0">
    <circle cx="871" cy="12" r="3" />
    <path d="M874 12h142" />
    <circle cx="1018" cy="12" r="3" />
    <path d="M1021 12h20" />
    <circle cx="888" cy="33" r="14" strokeWidth="2" />
    <path d="M883 27v12M883 27h9l-4 5 5 6" strokeWidth="1.8" />
    <circle cx="925" cy="27" r="3" />
    <path d="M928 27h80l40 24M960 54l25-20h55l-20 20M1060 20c0 20 10 16 30 16h40l30-16h110M1075 40h50M1040 54l20-14" />
    <path d="M1120 0c-2 22-8 34-26 36M1135 0c0 30-14 42-30 48" />
  </svg>
);

export default function App() {
  return (
    <div className="w-[1280px] h-[720px] overflow-hidden flex flex-col bg-black font-['Roboto',sans-serif]">
      <div className="relative bg-[#217346] shrink-0">
        <Circuit />
        <TitleBar />
        <TabsRow />
      </div>
      <Ribbon />
      <FormulaBar />
      <Sheet />
      <SheetTabs />
      <StatusBar />
    </div>
  );
}
